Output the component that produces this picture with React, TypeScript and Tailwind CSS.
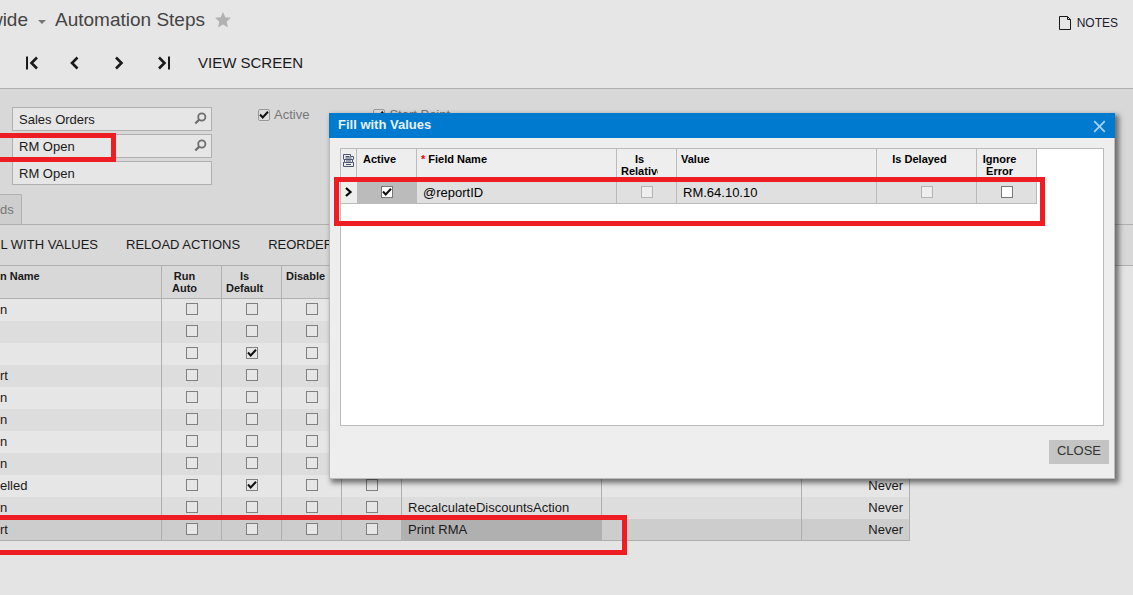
import React from "react";

const CHECK = "size-3 shrink-0 appearance-none border checked:bg-[url('data:image/svg+xml,%3Csvg%20xmlns=%22http://www.w3.org/2000/svg%22%20viewBox=%220%200%2010%2010%22%3E%3Cpath%20d=%22M1%204.500l2.700%203L9%201.800%22%20fill=%22none%22%20stroke=%22%23111%22%20stroke-width=%222%22/%3E%3C/svg%3E')]";

function Box({ label, checked = false, tone = "page" }: { label: string; checked?: boolean; tone?: "page" | "light" | "muted" }) {
  const color =
    tone === "light" ? "border-[#777] bg-white" : tone === "muted" ? "border-[#b5b5b5] bg-[#eee]" : "border-[#808080] bg-[#e6e6e6]";
  return (
    <div className="flex justify-center pb-0.5">
      <input type="checkbox" aria-label={label} defaultChecked={checked} className={`block ${CHECK} ${color}`} />
    </div>
  );
}

function OptionBox({ label }: { label: string }) {
  return (
    <label className="flex h-4 items-center gap-1 text-[13px] text-[#777]">
      <input type="checkbox" defaultChecked disabled className={`${CHECK} rounded-[2px] border-[#999] bg-[#ddd]`} />
      {label}
    </label>
  );
}

function Field({ label, value, lookup }: { label: string; value: string; lookup?: boolean }) {
  return (
    <div className="flex h-6 items-center border border-[#b0b0b0] bg-[#e6e6e6] pr-1">
      <input aria-label={label} defaultValue={value} className="h-full min-w-0 flex-1 bg-transparent pl-1.5 text-[13px] text-[#1a1a1a] outline-none" />
      {lookup && (
        <button aria-label={`Look up ${label}`} className="pb-0.5">
          <svg width="13" height="13" viewBox="0 0 13 13" fill="none" stroke="#6e6e6e" strokeWidth="1.8">
            <circle cx="7.8" cy="5" r="3.6" />
            <path d="M5.2 7.6L1.3 11.5" strokeWidth="2.2" />
          </svg>
        </button>
      )}
    </div>
  );
}

function NavButton({ label, d, bar }: { label: string; d: string; bar?: string }) {
  return (
    <button aria-label={label} className="h-6 w-4">
      <svg width="16" height="16" viewBox="0 0 16 16" fill="none" stroke="#1a1a1a" strokeWidth="2.6">
        <path d={d} />
        {bar && <path d={bar} strokeWidth="2" />}
      </svg>
    </button>
  );
}

const rows = [
  { name: "n" },
  { name: "" },
  { name: "", isDefault: true },
  { name: "rt" },
  { name: "n" },
  { name: "n" },
  { name: "n" },
  { name: "n" },
  { name: "elled", isDefault: true },
  { name: "n", action: "RecalculateDiscountsAction" },
  { name: "rt", action: "Print RMA", selected: true },
];

const TH = "border-r border-b border-[#b0b0b0] px-1 pt-1 align-top font-bold";
const TD = "border-r border-[#b0b0b0] p-0 group-last:border-b";
const DTH = "border-r border-b border-[#bbb] px-1 pt-1 align-top font-bold";
const DTD = "border-r border-b border-[#bbb] p-0";

function StepsTable() {
  return (
    <table className="w-[910px] table-fixed border-separate border-spacing-0 text-[13px] text-[#1a1a1a]">
      <colgroup>
        <col className="w-[162px]" />
        <col className="w-[60px]" />
        <col className="w-[60px]" />
        <col className="w-[60px]" />
        <col className="w-[60px]" />
        <col className="w-[200px]" />
        <col className="w-[200px]" />
        <col className="w-[108px]" />
      </colgroup>
      <thead>
        <tr className="h-[33px] bg-[#d8d8d8] text-[11px] leading-3">
          <th className="border-r border-b border-[#b0b0b0] pt-1 text-left align-top">n Name</th>
          <th className={`${TH} pr-[18px]`}>Run Auto</th>
          <th className={`${TH} pr-[18px]`}>Is Default</th>
          <th className={`${TH} text-left`}>Disable</th>
          <th className={TH}></th>
          <th className={TH}></th>
          <th className={TH}></th>
          <th className={TH}></th>
        </tr>
      </thead>
      <tbody>
        {rows.map((r, i) => (
          <tr
            key={i}
            className={`group h-[22px] last:leading-5 ${r.selected ? "bg-[#cdcdcd]" : i % 2 ? "bg-[#dddddd]" : "bg-[#e6e6e6]"}`}
          >
            <td className={TD}>{r.name}</td>
            {["Run auto", "Is default", "Disabled", "Hidden"].map((c) => (
              <td key={c} className={TD}>
                <Box label={c} checked={c === "Is default" && !!r.isDefault} />
              </td>
            ))}
            <td className={`${TD} pl-1.5 ${r.selected ? "bg-[#b0b0b0]" : ""}`}>{r.action}</td>
            <td className={TD}></td>
            <td className={`${TD} pr-1.5 text-right`}>Never</td>
          </tr>
        ))}
      </tbody>
    </table>
  );
}

function FillDialog() {
  return (
    <div
      role="dialog"
      aria-label="Fill with Values"
      className="absolute top-[113px] right-[18px] left-[329px] bg-[#eee] shadow-[3px_3px_5px_1px_rgba(0,0,0,0.5)]"
    >
      <div className="flex h-[25px] items-center justify-between bg-[#007ace] px-[9px]">
        <h2 className="pb-0.5 text-[13px] font-bold text-[#e6f2fb]">Fill with Values</h2>
        <button aria-label="Close dialog" className="pt-0.5">
          <svg width="13" height="13" viewBox="0 0 13 13" stroke="#a6d0f0" strokeWidth="1.8">
            <path d="M1.2 1.2l10.6 10.6M11.8 1.2L1.2 11.8" />
          </svg>
        </button>
      </div>
      <div className="border-x border-b border-[#bbb]">
        <div className="px-2.5 pt-2.5">
          <div className="h-[278px] border border-[#bbb] bg-white">
            <table className="w-[696px] table-fixed border-separate border-spacing-0 text-[13px] text-black">
              <colgroup>
                <col className="w-[16px]" />
                <col className="w-[60px]" />
                <col className="w-[200px]" />
                <col className="w-[60px]" />
                <col className="w-[200px]" />
                <col className="w-[100px]" />
                <col className="w-[60px]" />
              </colgroup>
              <thead>
                <tr className="h-[33px] bg-[#eee] text-[11px] leading-3">
                  <th className="border-r border-b border-[#bbb] p-0 pt-[5px] align-top">
                    <svg width="11" height="13" viewBox="0 0 11 13" className="mx-auto" fill="none" stroke="#4a5670">
                      <path d="M.5 5V.5h7v2h3V5M.5 5.500h10M2.500 2.500h4M2.500 4h6M1.500 5.500v3h8v-3M3 7h5M.5 8v4.500h10V8M2 8.500h7M3 10.500h5" />
                    </svg>
                  </th>
                  <th className={`${DTH} pl-1.5 text-left`}>Active</th>
                  <th className={`${DTH} text-left`}>
                    <span className="text-red-600">*</span> Field Name
                  </th>
                  <th className={`${DTH} pr-[18px]`}>
                    <div className="overflow-hidden">Is Relative</div>
                  </th>
                  <th className={`${DTH} text-left`}>Value</th>
                  <th className={`${DTH} pr-[18px]`}>Is Delayed</th>
                  <th className={`${DTH} pr-[18px]`}>Ignore Error</th>
                </tr>
              </thead>
              <tbody>
                <tr className="h-[22px] bg-[#e0e0e0]">
                  <td className="border-b border-[#bbb] bg-[#eee] p-0 pb-0.5">
                    <svg width="8" height="10" viewBox="0 0 8 10" className="mx-auto" fill="none" stroke="#000" strokeWidth="2.2">
                      <path d="M1 1l4.500 4L1 9" />
                    </svg>
                  </td>
                  <td className="border-b border-[#bbb] bg-[#bbb] p-0">
                    <Box label="Active" checked tone="light" />
                  </td>
                  <td className={`${DTD} pl-1.5`}>@reportID</td>
                  <td className={DTD}>
                    <Box label="Is relative" tone="muted" />
                  </td>
                  <td className={`${DTD} pl-1.5`}>RM.64.10.10</td>
                  <td className={DTD}>
                    <Box label="Is delayed" tone="muted" />
                  </td>
                  <td className={DTD}>
                    <Box label="Ignore error" tone="light" />
                  </td>
                </tr>
              </tbody>
            </table>
          </div>
        </div>
        <div className="flex justify-end py-3.5 pr-[5px]">
          <button className="h-6 w-[60px] bg-[#c4c4c4] pb-0.5 text-[13px] text-[#333]">CLOSE</button>
        </div>
      </div>
    </div>
  );
}

export default function App() {
  return (
    <div className="relative min-h-screen overflow-hidden bg-[#e4e4e4] font-['Liberation_Sans',Arial,sans-serif]">
      <header className="flex h-[89px] flex-col border-b border-[#b0b0b0] bg-[#e6e6e6]">
        <div className="flex h-10 items-center justify-between pr-[15px]">
          <div className="flex items-center text-[19px] text-[#444]">
            <div className="flex w-7 justify-end overflow-hidden">wide</div>
            <svg width="8" height="4" viewBox="0 0 8 4" className="mt-1 ml-2.5" fill="#777">
              <path d="M0 0h8L4 4z" />
            </svg>
            <h1 className="ml-[9px]">Automation Steps</h1>
            <svg width="16" height="16" viewBox="0 0 16 16" className="ml-2.5" fill="#b2b2b2">
              <path d="M8 0l2.300 5.300 5.700.5-4.300 3.800 1.300 5.900L8 12.400 3 15.500l1.300-5.900L0 5.800l5.700-.5z" />
            </svg>
          </div>
          <button className="mt-1.5 flex items-center gap-1.5 text-xs text-[#1a1a2a]">
            <svg width="12" height="14" viewBox="0 0 12 14" fill="none" stroke="#1a1a1a">
              <path d="M.5.5h8l3 3v10H.5zM8.500.5v3h3" />
            </svg>
            NOTES
          </button>
        </div>
        <nav className="flex h-[46px] items-center pl-6">
          <div className="flex gap-7">
            <NavButton label="First" d="M13 2.500L7.500 8l5.500 5.500" bar="M3 1.500v13" />
            <NavButton label="Previous" d="M9.500 2.500L4 8l5.500 5.500" />
            <NavButton label="Next" d="M4 2.500L9.500 8 4 13.500" />
            <NavButton label="Last" d="M3 2.500L8.500 8 3 13.500" bar="M13 1.500v13" />
          </div>
          <button className="ml-[26px] text-[15px] text-[#1a1a1a]">VIEW SCREEN</button>
        </nav>
      </header>
      <main>
        <section className="flex h-[105px] bg-[#d8d8d8] pt-[18px] pl-3">
          <div className="flex w-[200px] flex-col gap-[3px]">
            <Field label="Screen" value="Sales Orders" lookup />
            <Field label="Step" value="RM Open" lookup />
            <Field label="Description" value="RM Open" />
          </div>
          <div className="ml-[46px] flex gap-16">
            <OptionBox label="Active" />
            <OptionBox label="Start Point" />
          </div>
        </section>
        <div className="flex h-[31px] border-b border-[#b0b0b0] bg-[#d8d8d8]">
          <button className="w-[22px] border-t border-r border-[#b0b0b0] bg-[#cecece] text-left text-[13px] text-[#777]">ds</button>
        </div>
        <div className="flex h-10 items-center gap-7 bg-[#d8d8d8] text-[13px] text-[#1a1a1a]">
          <div className="flex w-[98px] justify-end">
            <button className="whitespace-nowrap">L WITH VALUES</button>
          </div>
          <button>RELOAD ACTIONS</button>
          <button>REORDER</button>
        </div>
        <div className="border-t border-[#b0b0b0]">
          <StepsTable />
        </div>
      </main>
      <FillDialog />
      <div className="pointer-events-none absolute top-[133px] -left-2 h-[29px] w-[124px] border-5 border-[#ee1c23]" />
      <div className="pointer-events-none absolute top-[515px] -left-2 h-10 w-[635px] border-5 border-[#ee1c23]" />
      <div className="pointer-events-none absolute top-[177px] left-[334px] h-[49px] w-[711px] border-5 border-[#ee1c23]" />
    </div>
  );
}
